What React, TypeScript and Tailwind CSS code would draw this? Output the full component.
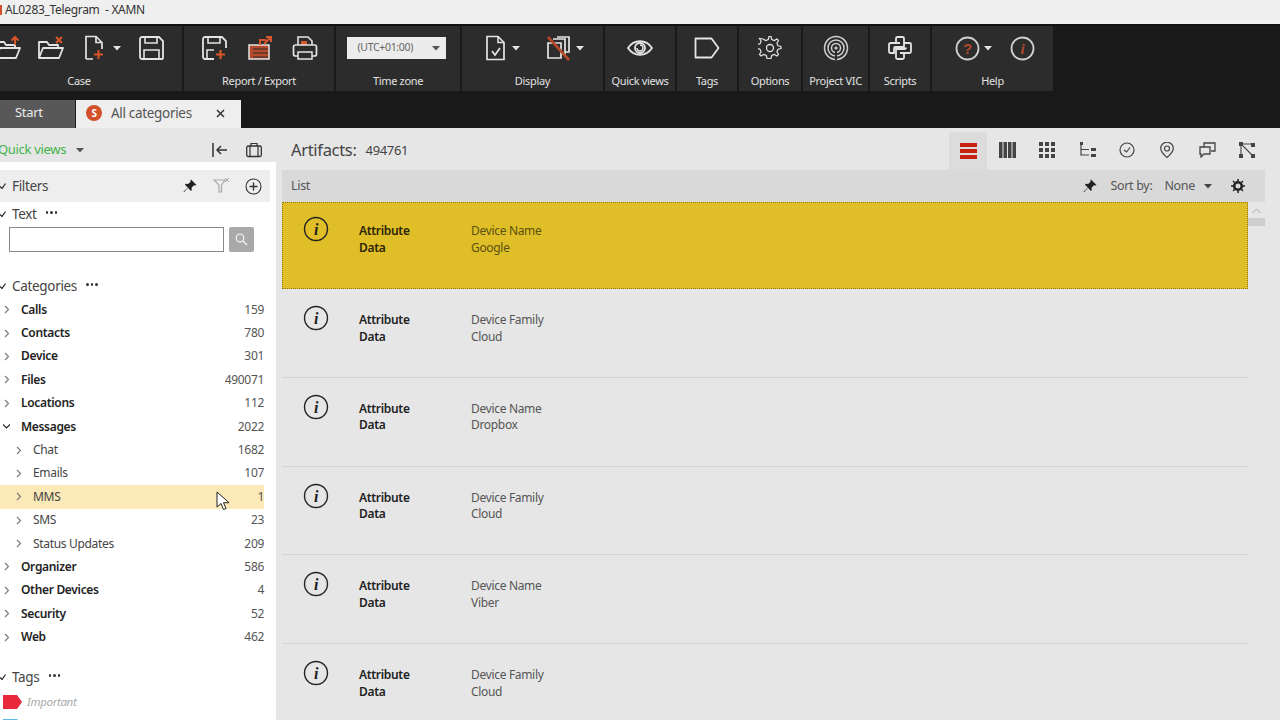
import React from "react";

const S = ({ w, h, children, cls = "" }: { w: number; h: number; children: React.ReactNode; cls?: string }) => (
  <svg width={w} height={h} viewBox={`0 0 ${w} ${h}`} fill="none" className={`shrink-0 ${cls}`}>{children}</svg>
);
const W = "#e4e4e4";
const O = "#d9552b";
const Caret = ({ c = "#e4e4e4" }: { c?: string }) => <svg width="8" height="5" viewBox="0 0 8 5" className="shrink-0"><path d="M0 0h8L4 4.5z" fill={c} /></svg>;

const Folder = ({ mark }: { mark: "up" | "x" }) => (
  <S w={28} h={26}>
    <path d="M2 23V7h8l2 3h9v3M2 23l4-10h20l-4 10z" stroke={W} strokeWidth="1.8" strokeLinejoin="round" />
    {mark === "up" ? <path d="M21 10V2M17.500 5.500 21 2l3.500 3.500" stroke={O} strokeWidth="2" /> : <path d="m19 2 6 6m0-6-6 6" stroke={O} strokeWidth="2" />}
  </S>
);
const Save = ({ plus }: { plus?: boolean }) => (
  <S w={27} h={26}>
    <path d="M2 4a2 2 0 0 1 2-2h17l4 4v17a1 1 0 0 1-1 1H4a2 2 0 0 1-2-2z" stroke={W} strokeWidth="1.8" />
    <path d="M7 2v6h12V2M6 24v-9h15v9" stroke={W} strokeWidth="1.6" />
    {plus && <><rect x="13" y="13" width="14" height="13" fill="#2b2b2b" /><path d="M19.500 15v9M15 19.500h9" stroke={O} strokeWidth="2.200" /></>}
  </S>
);
const Doc = ({ children }: { children?: React.ReactNode }) => (
  <S w={24} h={26}>
    <path d="M3 1.500h11l6 6v17H3z" stroke={W} strokeWidth="1.700" />
    <path d="M14 1.500v6h6" stroke={W} strokeWidth="1.500" />
    {children}
  </S>
);

const Group = ({ w, label, children, gap = "gap-0", pr = "" }: { w: number; label: string; children: React.ReactNode; gap?: string; pr?: string }) => (
  <div style={{ width: w }} className="h-full bg-[#2c2c2c] flex flex-col items-center shrink-0">
    <div className={`h-[44px] pt-[0px] flex items-center justify-center ${gap} ${pr}`}>{children}</div>
    <div className="text-[11px] leading-[16px] text-[#e2e2e2] mt-[3px] whitespace-nowrap">{label}</div>
  </div>
);

const Toolbar = () => (
  <div className="h-[65px] flex gap-[2px] bg-[#191919] shrink-0 overflow-hidden">
    <div style={{ width: 182 }} className="h-full bg-[#2c2c2c] flex flex-col shrink-0">
      <div className="h-[44px] flex items-center -ml-[6px] gap-[15px]">
        <Folder mark="up" /><Folder mark="x" />
        <div className="flex items-center gap-[6px] ml-[3px]">
          <S w={24} h={26}>
            <path d="M3 24V1.500h10l6 6V14M13 1.500v6h6M3 24h7" stroke={W} strokeWidth="1.700" />
            <path d="M15.500 15v9M11 19.500h9" stroke={O} strokeWidth="2" />
          </S>
          <Caret />
        </div>
        <div className="ml-[2px]"><Save /></div>
      </div>
      <div className="text-[11px] leading-[16px] text-[#e2e2e2] mt-[3px] text-center -ml-[24px]">Case</div>
    </div>
    <Group w={150} label="Report / Export" gap="gap-[19px]">
      <Save plus />
      <S w={26} h={26}>
        <path d="M2 10h20v14H2z" fill="#b5492a" stroke={W} strokeWidth="1.500" />
        <path d="M6 14h15M6 18h15M6 22h15" stroke="#2c2c2c" strokeWidth="1.200" />
        <path d="M13 10V5h6M17 9l7-7M19 2h5v5" stroke={O} strokeWidth="2" />
      </S>
      <S w={26} h={26}>
        <path d="M6 10V2h10l4 4v4" stroke={W} strokeWidth="1.600" />
        <path d="M9 6h6v4H9z" fill={O} />
        <rect x="1.500" y="10" width="23" height="11" rx="2" stroke={W} strokeWidth="1.700" />
        <path d="M6 17h14v7H6z" fill="#2c2c2c" stroke={W} strokeWidth="1.500" />
      </S>
    </Group>
    <Group w={124} label="Time zone">
      <div className="w-[99px] h-[22px] -ml-[4px] bg-[#ececec] flex items-center justify-between pl-[11px] pr-[6px] text-[10.500px] text-[#666]">(UTC+01:00)<Caret c="#555" /></div>
    </Group>
    <Group w={141} label="Display" gap="gap-[4px]" pr="pl-[3px]">
      <Doc><path d="m8 16 3 4 5-7" stroke={W} strokeWidth="1.700" /></Doc>
      <Caret />
      <div className="w-[18px]" />
      <S w={26} h={26}>
        <path d="M2 8h13v15H2z" stroke={W} strokeWidth="1.700" />
        <path d="M7 4h12v15H15M11 2h12v15h-4" stroke={W} strokeWidth="1.700" />
        <path d="m2 2 21 23" stroke="#b5492a" strokeWidth="2.600" />
      </S>
      <Caret />
    </Group>
    <Group w={70} label="Quick views">
      <S w={26} h={18}>
        <path d="M1 9c6-9 18-9 24 0-6 9-18 9-24 0z" stroke={W} strokeWidth="1.800" />
        <circle cx="13" cy="9" r="5" stroke={W} strokeWidth="1.800" />
        <path d="M13 6a3 3 0 1 1-3 3" stroke={W} strokeWidth="1.400" />
      </S>
    </Group>
    <Group w={60} label="Tags">
      <S w={26} h={22}>
        <path d="M1.500 1.500h16l7 9.500-7 9.500h-16z" stroke={W} strokeWidth="1.800" strokeLinejoin="round" />
      </S>
    </Group>
    <Group w={62} label="Options">
      <S w={24} h={24}>
        <path d="M12 1.500h2l.7 3 2.600 1.100 2.700-1.600 1.500 1.500-1.600 2.700 1.100 2.600 3 .7v2l-3 .7-1.100 2.600 1.600 2.700-1.500 1.500-2.700-1.600-2.600 1.100-.7 3h-4l-.7-3-2.600-1.100-2.700 1.600-1.500-1.500 1.600-2.700-1.100-2.600-3-.7v-4l3-.7 1.100-2.600-1.600-2.700L6 4l2.700 1.600 2.600-1.100z" stroke={W} strokeWidth="1.200" transform="translate(-1 -1)" />
        <circle cx="12" cy="12" r="3.500" stroke={W} strokeWidth="1.300" />
      </S>
    </Group>
    <Group w={65} label="Project VIC">
      <S w={26} h={26}>
        <circle cx="13" cy="13" r="11.500" stroke="#cfcfcf" strokeWidth="1.500" />
        <circle cx="13" cy="13" r="8" stroke="#cfcfcf" strokeWidth="1.500" />
        <circle cx="13" cy="13" r="4.500" stroke="#cfcfcf" strokeWidth="1.500" />
        <circle cx="13" cy="13" r="1.600" fill="#cfcfcf" />
        <path d="M13 15v10" stroke="#2c2c2c" strokeWidth="2" />
      </S>
    </Group>
    <Group w={60} label="Scripts">
      <S w={26} h={26}>
        <path d="M9 8V3.500A1.500 1.500 0 0 1 10.500 2h5A1.500 1.500 0 0 1 17 3.500V12H8.500A1.500 1.500 0 0 0 7 13.500V18H3.500A1.500 1.500 0 0 1 2 16.500v-7A1.500 1.500 0 0 1 3.500 8H13" stroke={W} strokeWidth="1.800" />
        <path d="M17 8h5.500A1.500 1.500 0 0 1 24 9.500v7a1.500 1.500 0 0 1-1.500 1.500H13M17 18v4.500a1.500 1.500 0 0 1-1.500 1.500h-5A1.500 1.500 0 0 1 9 22.500V14h8.500a1.500 1.500 0 0 0 1.500-1.500" stroke={W} strokeWidth="1.800" />
      </S>
    </Group>
    <Group w={121} label="Help" gap="gap-[4px]" pr="pl-[5px]">
      <S w={25} h={25}>
        <circle cx="12.500" cy="12.500" r="11" stroke="#cfcfcf" strokeWidth="1.800" />
        <text x="12.500" y="18" textAnchor="middle" fill="#b5492a" fontSize="15" fontWeight="700" fontFamily="'Liberation Sans',sans-serif">?</text>
      </S>
      <Caret />
      <div className="w-[10px]" />
      <S w={25} h={25}>
        <circle cx="12.500" cy="12.500" r="11" stroke="#cfcfcf" strokeWidth="1.800" />
        <text x="12.500" y="18" textAnchor="middle" fill="#b5492a" fontSize="15" fontWeight="700" fontStyle="italic" fontFamily="'Liberation Serif',serif">i</text>
      </S>
    </Group>
  </div>
);

const Tabs = () => (
  <div className="h-[37px] flex items-end gap-[1px] shrink-0 bg-[#191919]">
    <div className="w-[75px] h-[28px] bg-[#585858] text-[#ececec] text-[13px] flex items-center pl-[15px] pb-[2px]">Start</div>
    <div className="w-[165px] h-[28px] bg-[#eeeeee] flex items-center pl-[10px] pb-[2px] text-[13.500px] text-[#555]">
      <span className="w-[16px] h-[16px] rounded-full bg-[#d4502a] text-white text-[10px] font-bold flex items-center justify-center">S</span>
      <span className="ml-[9px]">All categories</span>
      <svg width="9" height="9" viewBox="0 0 9 9" className="ml-[24px]"><path d="m1 1 7 7m0-7L1 8" stroke="#333" strokeWidth="1.500" /></svg>
    </div>
  </div>
);

const Chev = ({ open }: { open?: boolean }) => (
  <svg width="7" height="9" viewBox="0 0 7 9" className="shrink-0">
    {open ? <path d="M0 2.500 3.500 6 7 2.500" stroke="#222" strokeWidth="1.200" fill="none" /> : <path d="m2 1 3.500 3.500L2 8" stroke="#777" strokeWidth="1.100" fill="none" />}
  </svg>
);

const Tick = () => <svg width="6" height="6" viewBox="0 0 6 6" className="shrink-0"><path d="M0 3.500 2 5.500 5.500 .5" stroke="#222" strokeWidth="1.200" fill="none" /></svg>;
const Dots = () => <span className="flex gap-[2px] ml-[3px] mb-[3px]"><i className="w-[2.500px] h-[2.500px] rounded-full bg-[#333]" /><i className="w-[2.500px] h-[2.500px] rounded-full bg-[#333]" /><i className="w-[2.500px] h-[2.500px] rounded-full bg-[#333]" /></span>;

const Head = ({ label, dots = true }: { label: string; dots?: boolean }) => (
  <div className="flex items-center gap-[6px] text-[13.500px] text-[#444] h-[24px]"><Tick /><span>{label}</span>{dots && <Dots />}</div>
);

const tree: [string, string, number, boolean?, boolean?][] = [
  ["Calls", "159", 0], ["Contacts", "780", 0], ["Device", "301", 0], ["Files", "490071", 0], ["Locations", "112", 0], ["Messages", "2022", 0, true],
  ["Chat", "1682", 1], ["Emails", "107", 1], ["MMS", "1", 1, false, true], ["SMS", "23", 1], ["Status Updates", "209", 1],
  ["Organizer", "586", 0], ["Other Devices", "4", 0], ["Security", "52", 0], ["Web", "462", 0],
];

const Pin = () => (
  <svg width="14" height="14" viewBox="0 0 14 14" className="shrink-0"><path d="M8 0.500 13.500 6l-1.200.6-1.300-.4-2.500 2.500.3 2.300-1 1L5 8.800l-4 4.500-.5-.5L4.800 8.600 1.900 5.800l1-1 2.300.3 2.500-2.500-.3-1.300z" fill="#222" /></svg>
);

const Sidebar = () => (
  <div className="w-[276px] shrink-0 flex flex-col bg-[#e6e6e6] overflow-hidden">
    <div className="h-[34px] shrink-0 flex items-center -ml-[2px] pr-[14px] pt-[10px]">
      <span className="text-[13px] text-[#3fb54a]">Quick views</span>
      <span className="ml-[10px]"><Caret c="#555" /></span>
      <svg width="16" height="14" viewBox="0 0 16 14" className="ml-auto"><path d="M1 0v14M15 7H5M9 3 5 7l4 4" stroke="#333" strokeWidth="1.500" fill="none" /></svg>
      <svg width="16" height="16" viewBox="0 0 16 16" className="ml-[18px]"><rect x=".7" y="4" width="14.600" height="10.500" rx="1.500" stroke="#333" strokeWidth="1.300" fill="none" /><path d="M5 4V1.500h6V4M4 4v10.500M12 4v10.500" stroke="#333" strokeWidth="1.200" fill="none" /></svg>
    </div>
    <div className="flex-1 bg-white flex flex-col">
      <div className="h-[32px] mt-[8px] mr-[6px] bg-[#eeeeee] flex items-center pr-[8px]">
        <div className="flex items-center gap-[6px] text-[13.500px] text-[#444]"><Tick /><span>Filters</span></div>
        <span className="ml-auto"><Pin /></span>
        <svg width="18" height="18" viewBox="0 0 18 18" className="ml-[16px]"><path d="M1 3h11L8.500 8v7H6V8z" stroke="#aaa" strokeWidth="1.200" fill="none" /><path d="m12 1 4 4m0-4-4 4" stroke="#aaa" strokeWidth="1" /></svg>
        <svg width="17" height="17" viewBox="0 0 17 17" className="ml-[14px]"><circle cx="8.500" cy="8.500" r="7.500" stroke="#333" strokeWidth="1.100" fill="none" /><path d="M8.500 4.500v8M4.500 8.500h8" stroke="#333" strokeWidth="1.400" /></svg>
      </div>
      <Head label="Text" />
      <div className="flex gap-[5px] ml-[9px] mt-[1px]">
        <div className="w-[215px] h-[25px] border border-[#888] bg-white" />
        <div className="w-[25px] h-[25px] rounded-[2px] bg-[#a9a9a9] flex items-center justify-center">
          <svg width="13" height="13" viewBox="0 0 13 13"><circle cx="5" cy="5" r="3.800" stroke="#eee" strokeWidth="1.300" fill="none" /><path d="m8 8 4 4" stroke="#eee" strokeWidth="1.600" /></svg>
        </div>
      </div>
      <div className="mt-[22px]"><Head label="Categories" /></div>
      <div className="pr-[12px]">
        {tree.map(([n, c, lvl, open, hot]) => (
          <div key={n} className={`h-[23.400px] flex items-center text-[12px] ${hot ? "bg-[#fbe9b7]" : ""}`}>
            <span className={lvl ? "pl-[15px]" : "pl-[3px]"}><Chev open={open} /></span>
            <span className={`ml-[11px] ${lvl ? "text-[#444]" : "font-semibold text-[#222]"}`}>{n}</span>
            <span className="ml-auto text-[#555]">{c}</span>
          </div>
        ))}
      </div>
      <div className="mt-[16px]"><Head label="Tags" /></div>
      <div className="flex items-center h-[24px] ml-[3px] mt-[1px] gap-[5px]">
        <svg width="19" height="14" viewBox="0 0 19 14"><path d="M0 0h14l5 7-5 7H0z" fill="#e8283c" /></svg>
        <span className="text-[11.500px] italic text-[#aaa]">Important</span>
      </div>
      <svg width="19" height="14" viewBox="0 0 19 14" className="ml-[3px] mt-[5px] shrink-0"><path d="M0 0h14l5 7-5 7H0z" fill="#5bb5e8" /></svg>
    </div>
  </div>
);

const ViewIcons = () => {
  const c = "#444";
  return (
    <div className="ml-auto flex mr-[13px]">
      <div className="w-[38px] h-[38px] bg-[#dcdcdc] flex items-center justify-center mr-[1px]">
        <svg width="17" height="16" viewBox="0 0 17 16"><path d="M0 0h17v4H0zM0 6h17v4H0zM0 12h17v4H0z" fill="#c9210f" /></svg>
      </div>
      {[
        <svg width="17" height="16" viewBox="0 0 17 16"><path d="M0 0h3.500v16H0zM4.500 0H8v16H4.500zM9 0h3.500v16H9zM13.500 0H17v16h-3.500z" fill={c} /></svg>,
        <svg width="16" height="16" viewBox="0 0 16 16"><path d="M0 0h4v4H0zM6 0h4v4H6zM12 0h4v4h-4zM0 6h4v4H0zM6 6h4v4H6zM12 6h4v4h-4zM0 12h4v4H0zM6 12h4v4H6zM12 12h4v4h-4z" fill={c} /></svg>,
        <svg width="17" height="16" viewBox="0 0 17 16"><path d="M1 0h3v3H1zM12 6h5v3h-5zM12 12h5v3h-5z" fill={c} /><path d="M2 3v10h8M2 7.500h8" stroke={c} strokeWidth="1.200" fill="none" /></svg>,
        <svg width="16" height="16" viewBox="0 0 16 16" fill="none"><circle cx="8" cy="8" r="7" stroke={c} strokeWidth="1.200" /><path d="m5 8 2.500 2L11 5.500" stroke={c} strokeWidth="1.200" /></svg>,
        <svg width="14" height="16" viewBox="0 0 14 16" fill="none"><path d="M7 15.500C3 12 .7 9.500.7 6.500a6.300 6.300 0 0 1 12.600 0c0 3-2.300 5.500-6.300 9z" stroke={c} strokeWidth="1.200" /><circle cx="7" cy="6.500" r="2.500" stroke={c} strokeWidth="1.200" /></svg>,
        <svg width="17" height="16" viewBox="0 0 17 16" fill="none"><path d="M5 5V1h11v8h-4" stroke={c} strokeWidth="1.300" /><path d="M1 5h10v7H5l-3 3v-3H1z" stroke={c} strokeWidth="1.300" /></svg>,
        <svg width="16" height="16" viewBox="0 0 16 16"><path d="M0 0h4v4H0zM12 1h4v4h-4zM0 12h4v4H0zM12 12h4v4h-4z" fill={c} /><path d="M2 4v8M4 2h8M4 4l9 9" stroke={c} strokeWidth="1.100" /></svg>,
      ].map((ic, i) => <div key={i} className={`h-[38px] flex items-center justify-center pb-[2px] ${i === 0 ? "w-[39px]" : "w-[40px]"}`}>{ic}</div>)}
    </div>
  );
};

const rows: [string, string][] = [["Device Name", "Google"], ["Device Family", "Cloud"], ["Device Name", "Dropbox"], ["Device Family", "Cloud"], ["Device Name", "Viber"], ["Device Family", "Cloud"]];

const InfoIcon = () => (
  <svg width="26" height="26" viewBox="0 0 26 26" className="shrink-0">
    <circle cx="13" cy="13" r="11.500" stroke="#222" strokeWidth="1.400" fill="none" />
    <text x="13" y="18.500" textAnchor="middle" fill="#222" fontSize="16" fontWeight="700" fontStyle="italic" fontFamily="'Liberation Serif',serif">i</text>
  </svg>
);

const Main = () => (
  <div className="flex-1 min-w-0 bg-[#e6e6e6] flex flex-col overflow-hidden pl-[6px]">
    <div className="h-[42px] shrink-0 flex pt-[4px] pl-[9px]">
      <div className="flex items-center h-[38px] pb-[2px] text-[#444]"><span className="text-[16.500px]">Artifacts:</span><span className="text-[13px] ml-[9px] mt-[2px]">494761</span></div>
      <ViewIcons />
    </div>
    <div className="flex mr-[15px] shrink-0 h-[32px] bg-[#d9d9d9] items-center pl-[9px] pr-[20px] text-[12.500px] text-[#555]">
      <span>List</span>
      <span className="ml-auto"><Pin /></span>
      <span className="ml-[13px]">Sort by:</span>
      <span className="ml-[12px]">None</span>
      <span className="ml-[9px]"><Caret c="#444" /></span>
      <svg width="14" height="14" viewBox="0 0 14 14" className="ml-[19px]"><circle cx="7" cy="7" r="3.800" fill="none" stroke="#222" strokeWidth="2.600" /><path d="M7 0v14M0 7h14M2 2l10 10M12 2 2 12" stroke="#222" strokeWidth="1.500" strokeDasharray="2.200 9.600" /></svg>
    </div>
    <div className="flex flex-1 min-h-0 mr-[15px]">
      <div className="flex-1 min-w-0">
        {rows.map(([a, b], i) => (
          <div key={i} className={i === 0
            ? "h-[87px] flex items-start pt-[13px] pl-[20px] bg-[#dfbe27] border border-dotted border-[#8f7a10]"
            : "h-[88.750px] flex items-start pt-[16px] pl-[21px] border-b border-[#d4d4d4]"}>
            <InfoIcon />
            <div className={`ml-[30px] w-[112px] mt-[7px] text-[12px] leading-[16.500px] font-semibold ${i === 0 ? "text-[#2c2508]" : "text-[#222]"}`}>Attribute<br />Data</div>
            <div className={`mt-[7px] text-[12px] leading-[16.500px] ${i === 0 ? "text-[#5c5114]" : "text-[#555]"}`}>{a}<br />{b}</div>
          </div>
        ))}
      </div>
      <div className="w-[17px] shrink-0 flex flex-col items-center">
        <svg width="9" height="6" viewBox="0 0 9 6" className="mt-[6px]"><path d="M.5 5 4.500 1l4 4" stroke="#aaa" fill="none" /></svg>
        <div className="w-full h-[8px] bg-[#cfcfcf] mt-[4px]" />
      </div>
    </div>
  </div>
);

export default function App() {
  return (
    <div className="relative w-[1280px] h-[720px] overflow-hidden flex flex-col bg-[#e6e6e6] font-['Noto_Sans',sans-serif] tracking-[-0.02em]">
      <div className="h-[24px] shrink-0 bg-[#efefef] flex items-center pb-[5px] text-[12px] text-[#333]">
        <span className="w-[2px] h-[10px] bg-[#d4502a] mr-[3px]" />AL0283_Telegram&nbsp; - XAMN
      </div>
      <div className="h-[2px] shrink-0 bg-[#111]" />
      <Toolbar />
      <Tabs />
      <div className="flex flex-1 min-h-0">
        <Sidebar />
        <Main />
      </div>
      <svg width="14" height="20" viewBox="0 0 14 20" className="absolute left-[216px] top-[491px]"><path d="M1 1v15l4-3.500 2.500 6 2.500-1-2.500-5.800H13z" fill="#fff" stroke="#222" strokeWidth="1" /></svg>
    </div>
  );
}
